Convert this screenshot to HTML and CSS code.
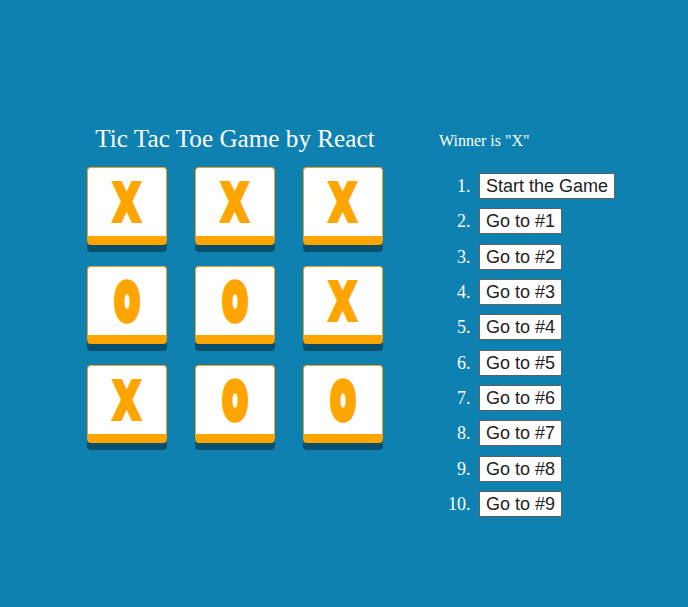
FILE: index.html
```html
<!DOCTYPE html>
<html>
<head>
<meta charset="utf-8">
<link rel="stylesheet" href="styles.css">
</head>
<body>
<div class="game">
  <div class="board-col">
    <h1 class="title">Tic Tac Toe Game by React</h1>
    <div class="board">
      <div class="square"><span class="mark mark-x">X</span></div>
      <div class="square"><span class="mark mark-x">X</span></div>
      <div class="square"><span class="mark mark-x">X</span></div>
      <div class="square"><span class="mark mark-o">O</span></div>
      <div class="square"><span class="mark mark-o">O</span></div>
      <div class="square"><span class="mark mark-x">X</span></div>
      <div class="square"><span class="mark mark-x">X</span></div>
      <div class="square"><span class="mark mark-o">O</span></div>
      <div class="square"><span class="mark mark-o">O</span></div>
    </div>
  </div>
  <div class="info">
    <div class="status">Winner is "X"</div>
    <ol class="moves">
      <li><button class="move">Start the Game</button></li>
      <li><button class="move">Go to #1</button></li>
      <li><button class="move">Go to #2</button></li>
      <li><button class="move">Go to #3</button></li>
      <li><button class="move">Go to #4</button></li>
      <li><button class="move">Go to #5</button></li>
      <li><button class="move">Go to #6</button></li>
      <li><button class="move">Go to #7</button></li>
      <li><button class="move">Go to #8</button></li>
      <li><button class="move">Go to #9</button></li>
    </ol>
  </div>
</div>
</body>
</html>
```

FILE: styles.css
```css
html, body {
  margin: 0;
  padding: 0;
}
body {
  background: #0e81b0;
  min-height: 607px;
  font-family: "Liberation Serif", "Times New Roman", serif;
  color: #ffffff;
}
.game {
  display: flex;
  align-items: flex-start;
  padding: 124px 0 0 87px;
}
.board-col {
  width: 296px;
}
.title {
  margin: 0 0 13px 0;
  font-size: 25.2px;
  font-weight: normal;
  line-height: 30px;
  text-align: center;
  white-space: nowrap;
}
.board {
  display: grid;
  grid-template-columns: repeat(3, 80px);
  column-gap: 28px;
  row-gap: 21px;
}
.square {
  box-sizing: border-box;
  width: 80px;
  height: 78px;
  background: #ffffff;
  border: 1px solid #f2a21a;
  border-bottom: 9px solid #ffa500;
  border-radius: 4px;
  box-shadow: 0 7px 0 #0a4f6c;
  display: flex;
  align-items: center;
  justify-content: center;
  overflow: hidden;
}
.mark {
  display: block;
  font-family: "DejaVu Sans", sans-serif;
  font-weight: bold;
  line-height: 60px;
  color: #ffa500;
}
.mark-x {
  font-size: 51px;
  -webkit-text-stroke: 4px #ffa500;
  transform: translateY(2px) scaleX(0.7);
}
.mark-o {
  font-size: 45px;
  -webkit-text-stroke: 8px #ffa500;
  transform: translateY(2px) scale(0.62, 1.06);
}
.info {
  margin-left: 56px;
  padding-top: 8px;
}
.status {
  font-size: 16px;
  line-height: 18px;
}
.moves {
  margin: 23px 0 0 0;
  padding-left: 36px;
  font-size: 18px;
  line-height: 26px;
}
.moves li {
  margin-bottom: 9.33px;
}
.move {
  box-sizing: border-box;
  height: 26px;
  margin: 0 0 0 4px;
  padding: 1px 6px;
  font-family: "Liberation Sans", Arial, sans-serif;
  font-size: 18px;
  line-height: 22px;
  color: #222222;
  background: #ffffff;
  border: 1px solid #5f5f5f;
  border-radius: 0;
}
```
